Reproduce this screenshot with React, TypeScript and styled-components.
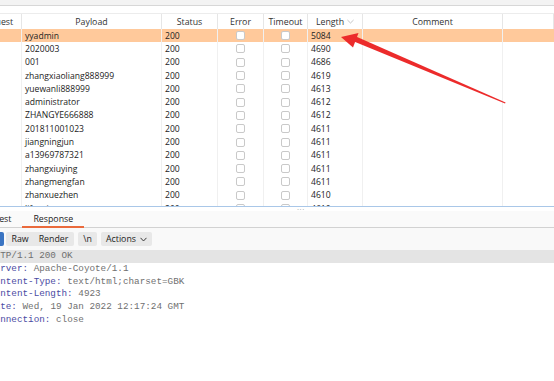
import styled, { createGlobalStyle } from 'styled-components';

const GlobalStyle = createGlobalStyle`
  html, body {
    margin: 0;
    padding: 0;
    background: #ffffff;
  }
  * {
    box-sizing: border-box;
  }
`;

type Row = { payload: string; length: string };

const rows: Row[] = [
  { payload: 'yyadmin', length: '5084' },
  { payload: '2020003', length: '4690' },
  { payload: '001', length: '4686' },
  { payload: 'zhangxiaoliang888999', length: '4619' },
  { payload: 'yuewanli888999', length: '4613' },
  { payload: 'administrator', length: '4612' },
  { payload: 'ZHANGYE666888', length: '4612' },
  { payload: '201811001023', length: '4611' },
  { payload: 'jiangningjun', length: '4611' },
  { payload: 'a13969787321', length: '4611' },
  { payload: 'zhangxiuying', length: '4611' },
  { payload: 'zhangmengfan', length: '4611' },
  { payload: 'zhanxuezhen', length: '4610' },
  { payload: 'lifanyi', length: '4610' },
];

const headers = [
  { name: 'Server', value: 'Apache-Coyote/1.1' },
  { name: 'Content-Type', value: 'text/html;charset=GBK' },
  { name: 'Content-Length', value: '4923' },
  { name: 'Date', value: 'Wed, 19 Jan 2022 12:17:24 GMT' },
  { name: 'Connection', value: 'close' },
];

export default function App() {
  return (
    <>
      <GlobalStyle />
      <Screen>
        <TopStrip />
        <TablePane>
          <Grid>
            <HeadCell>Request</HeadCell>
            <HeadCell>Payload</HeadCell>
            <HeadCell>Status</HeadCell>
            <HeadCell>Error</HeadCell>
            <HeadCell>Timeout</HeadCell>
            <HeadCell>
              Length <SortIcon viewBox='0 0 8 5'><path d='M0.5 0.8 L4 4.2 L7.5 0.8' /></SortIcon>
            </HeadCell>
            <HeadCell>Comment</HeadCell>
            <HeadCell />
          </Grid>
          {rows.map((r, i) => (
            <Grid key={i} $selected={i === 0}>
              <Cell />
              <Cell>{r.payload}</Cell>
              <Cell>200</Cell>
              <BoxCell><Check /></BoxCell>
              <BoxCell><Check /></BoxCell>
              <Cell>{r.length}</Cell>
              <Cell />
              <Cell $last />
            </Grid>
          ))}
        </TablePane>
        <Splitter>
          <Grip>···</Grip>
        </Splitter>
        <Tabs>
          <Tab>Request</Tab>
          <Tab $active>Response</Tab>
        </Tabs>
        <Toolbar>
          <PrettyBtn>Pretty</PrettyBtn>
          <Segment>
            <SegBtn>Raw</SegBtn>
            <SegBtn>Render</SegBtn>
          </Segment>
          <ToolBtn>\n</ToolBtn>
          <ToolBtn>
            Actions <ActIcon viewBox='0 0 8 5'><path d='M0.6 0.6 L4 4.2 L7.4 0.6' /></ActIcon>
          </ToolBtn>
        </Toolbar>
        <Code>
          <Line $band>HTTP/1.1 200 OK</Line>
          {headers.map((h) => (
            <Line key={h.name}>
              <HName>{h.name}:</HName> {h.value}
            </Line>
          ))}
        </Code>
        <Arrow viewBox='0 0 554 381'>
          <polygon points='354,41.5 505,103.6 505.6,102.4 356,36.5' fill='#ec2b2b' />
          <polygon points='341,37 358.5,33 353,47.5' fill='#ec2b2b' />
        </Arrow>
      </Screen>
    </>
  );
}

const Screen = styled.div`
  position: relative;
  width: 554px;
  height: 381px;
  overflow: hidden;
  font-family: 'Open Sans', 'Noto Sans', sans-serif;
  font-size: 8.6px;
  color: #222222;
  background: #ffffff;
`;

const TopStrip = styled.div`
  height: 6px;
  background: #f3f3f3;
  border-bottom: 1px solid #d7d7d7;
  margin-bottom: 7px;
`;

const TablePane = styled.div`
  height: 193px;
  overflow: hidden;
  margin-left: -28px;
  border-top: 1px solid #ececec;
`;

const Grid = styled.div<{ $selected?: boolean }>`
  display: grid;
  grid-template-columns: 50px 140px 56px 46px 44px 55px 140px 1fr;
  background: ${(p) => (p.$selected ? '#ffc99b' : 'transparent')};

  &:first-child {
    height: 15px;
  }
  &:not(:first-child) {
    height: 13.3px;
  }
`;

const HeadCell = styled.div`
  display: flex;
  align-items: center;
  justify-content: center;
  gap: 3px;
  color: #333333;
  font-size: 8.8px;
  border-right: 1px solid #e6e6e6;
  white-space: nowrap;
  overflow: hidden;
`;

const SortIcon = styled.svg`
  width: 7px;
  height: 5px;
  fill: none;
  stroke: #b5b5b5;
  stroke-width: 0.9;
`;

const Cell = styled.div<{ $last?: boolean }>`
  display: flex;
  align-items: center;
  padding-left: 3px;
  white-space: nowrap;
  overflow: hidden;
  border-right: ${(p) => (p.$last ? 'none' : '1px solid #f0f0f0')};
`;

const BoxCell = styled.div`
  display: flex;
  align-items: center;
  justify-content: center;
  border-right: 1px solid #f0f0f0;
`;

const Check = styled.span`
  width: 9px;
  height: 9px;
  border: 1px solid #c9c9c9;
  border-radius: 2px;
  background: #ffffff;
`;

const Splitter = styled.div`
  height: 5px;
  border-top: 1px solid #a9c7e8;
  display: flex;
  justify-content: flex-start;
  padding-left: 297px;
`;

const Grip = styled.span`
  font-size: 8px;
  line-height: 4px;
  color: #9a9a9a;
  letter-spacing: 0.5px;
`;

const Tabs = styled.div`
  display: flex;
  align-items: stretch;
  height: 17px;
  margin-left: -33px;
  background: #fafafa;
  border-bottom: 1px solid #d2d2d2;
`;

const Tab = styled.div<{ $active?: boolean }>`
  display: flex;
  align-items: center;
  padding: 0 11px;
  font-size: 8.8px;
  color: #222222;
  border-bottom: 2px solid ${(p) => (p.$active ? '#ea6a3c' : 'transparent')};
  margin-bottom: -1px;
`;

const Toolbar = styled.div`
  display: flex;
  align-items: center;
  gap: 4px;
  height: 22px;
  margin-left: -29px;
  background: #f9f9f9;
`;

const PrettyBtn = styled.div`
  height: 14px;
  padding: 0 4px;
  margin-right: -2px;
  display: flex;
  align-items: center;
  background: #3a74c2;
  color: #ffffff;
  border-radius: 2px;
  font-size: 8.8px;
`;

const Segment = styled.div`
  display: flex;
  height: 14px;
  padding: 0 1px;
  background: #e8e8e8;
  border-radius: 2px;
`;

const SegBtn = styled.div`
  display: flex;
  align-items: center;
  padding: 0 5px;
  font-size: 8.8px;
  color: #222222;
`;

const ToolBtn = styled.div`
  display: flex;
  align-items: center;
  gap: 4px;
  height: 14px;
  padding: 0 5px;
  background: #e8e8e8;
  border-radius: 2px;
  font-size: 8.8px;
  color: #222222;
`;

const ActIcon = styled.svg`
  width: 7px;
  height: 5px;
  fill: none;
  stroke: #333333;
  stroke-width: 1.1;
`;

const Code = styled.div`
  margin-left: -11px;
  font-family: 'Liberation Mono', 'DejaVu Sans Mono', monospace;
  font-size: 9.3px;
  color: #707070;
`;

const Line = styled.div<{ $band?: boolean }>`
  height: 12.8px;
  line-height: 12.8px;
  white-space: pre;
  background: ${(p) => (p.$band ? '#e4e4e4' : 'transparent')};
  margin-right: ${(p) => (p.$band ? '-11px' : '0')};
`;

const HName = styled.span`
  color: #4a4aa3;
`;

const Arrow = styled.svg`
  position: absolute;
  left: 0;
  top: 0;
  width: 554px;
  height: 381px;
  pointer-events: none;
`;
